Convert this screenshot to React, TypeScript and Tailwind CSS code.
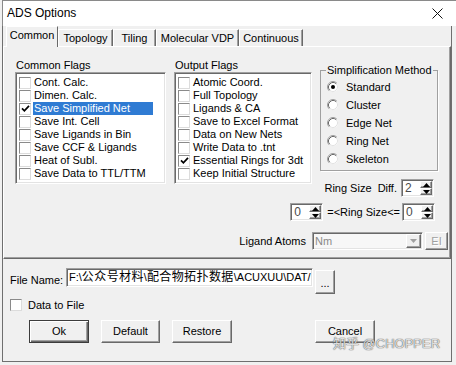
import React from "react";

const sunken =
  "border border-t-[#a0a0a0] border-l-[#a0a0a0] border-r-white border-b-white shadow-[inset_1px_1px_0_#696969,inset_-1px_-1px_0_#e3e3e3]";
const raised =
  "border border-t-white border-l-white border-r-[#696969] border-b-[#696969] shadow-[inset_-1px_-1px_0_#a0a0a0]";

const commonFlags = [
  { label: "Cont. Calc." },
  { label: "Dimen. Calc." },
  { label: "Save Simplified Net", checked: true, selected: true },
  { label: "Save Int. Cell" },
  { label: "Save Ligands in Bin" },
  { label: "Save CCF & Ligands" },
  { label: "Heat of Subl." },
  { label: "Save Data to TTL/TTM" },
];

const outputFlags = [
  { label: "Atomic Coord." },
  { label: "Full Topology" },
  { label: "Ligands & CA" },
  { label: "Save to Excel Format" },
  { label: "Data on New Nets" },
  { label: "Write Data to .tnt" },
  { label: "Essential Rings for 3dt", checked: true },
  { label: "Keep Initial Structure" },
];

const methods = ["Standard", "Cluster", "Edge Net", "Ring Net", "Skeleton"];

function Box({ checked }: { checked?: boolean }) {
  return (
    <span className="flex h-[12px] w-[12px] shrink-0 items-center justify-center border border-t-[#8a8a8a] border-l-[#8a8a8a] border-r-[#dcdcdc] border-b-[#dcdcdc] bg-white">
      {checked && (
        <svg width="9" height="9" viewBox="0 0 9 9">
          <path d="M1 4.3 L3.4 6.8 L8 1.8" stroke="#000" strokeWidth="1.7" fill="none" />
        </svg>
      )}
    </span>
  );
}

function FlagRow({ label, checked, selected }: { label: string; checked?: boolean; selected?: boolean }) {
  return (
    <div className="flex h-[13px] items-center">
      <Box checked={checked} />
      <span
        className={
          selected
            ? "ml-[2px] w-[120px] whitespace-nowrap bg-[#2f7bd3] pl-[1px] leading-[13px] text-white"
            : "ml-[2px] whitespace-nowrap pl-[1px] leading-[13px]"
        }
      >
        {label}
      </span>
    </div>
  );
}

function FlagList({ title, items, width }: { title: string; items: typeof commonFlags; width: string }) {
  return (
    <div className={width}>
      <div className="h-[13px] pl-[1px] leading-[13px]">{title}</div>
      <div className={`h-[112px] bg-white pl-[3px] pt-[3px] ${sunken}`}>
        {items.map((f) => (
          <FlagRow key={f.label} {...f} />
        ))}
      </div>
    </div>
  );
}

function Radio({ checked }: { checked?: boolean }) {
  return (
    <svg width="12" height="12" viewBox="0 0 12 12" className="shrink-0">
      <circle cx="6" cy="6" r="5" fill="#fff" />
      <path d="M2.11 9.89 A5.5 5.5 0 0 1 9.89 2.11" stroke="#a0a0a0" fill="none" />
      <path d="M2.82 9.18 A4.5 4.5 0 0 1 9.18 2.82" stroke="#696969" fill="none" />
      <path d="M9.18 2.82 A4.5 4.5 0 0 1 2.82 9.18" stroke="#e3e3e3" fill="none" />
      {checked && <circle cx="6" cy="6" r="2" fill="#000" />}
    </svg>
  );
}

function Spin({ value }: { value: string }) {
  return (
    <div className={`flex h-[18px] w-[33px] shrink-0 bg-white ${sunken}`}>
      <span className="flex-1 pl-[3px] text-[12px] leading-[16px] text-[#4a4a4a]">{value}</span>
      <div className="my-[1px] mr-[1px] flex w-[12px] flex-col">
        <div className={`flex h-[7px] items-center justify-center bg-[#f0f0f0] ${raised}`}>
          <svg width="7" height="4" viewBox="0 0 7 4">
            <path d="M0 4 H7 L3.5 0Z" fill="#000" />
          </svg>
        </div>
        <div className={`flex h-[7px] items-center justify-center bg-[#f0f0f0] ${raised}`}>
          <svg width="7" height="4" viewBox="0 0 7 4">
            <path d="M0 0 H7 L3.5 4Z" fill="#000" />
          </svg>
        </div>
      </div>
    </div>
  );
}

function Tab({ label, width, active }: { label: string; width: string; active?: boolean }) {
  return (
    <div
      className={
        active
          ? `relative z-10 -mb-px flex h-[21px] items-center justify-center border-t border-l border-r border-t-white border-l-white border-r-[#696969] bg-[#f0f0f0] pb-[3px] ${width}`
          : `flex h-[17px] items-center justify-center border-t border-l border-r border-t-white border-l-white border-r-[#696969] shadow-[inset_-1px_0_0_#a0a0a0] ${width}`
      }
    >
      {label}
    </div>
  );
}

function Button({ label, width, primary }: { label: string; width: string; primary?: boolean }) {
  return (
    <div
      className={
        primary
          ? `flex h-[23px] items-center justify-center border border-[#3c3c3c] shadow-[inset_1px_1px_0_#fff,inset_-1px_-1px_0_#696969,inset_-2px_-2px_0_#a0a0a0] ${width}`
          : `flex h-[23px] items-center justify-center ${raised} ${width}`
      }
    >
      {label}
    </div>
  );
}

export default function App() {
  return (
    <div className="relative h-[365px] w-[456px] overflow-hidden bg-[#f0f0f0] font-['Liberation_Sans','Noto_Sans_CJK_SC',sans-serif] text-[11px] leading-[13px] text-black">
      {/* title bar */}
      <div className="ml-[2px] flex h-[26px] w-[454px] items-center justify-between border-t border-l border-[#8a8a8a] bg-white pl-[4px] pr-[13px]">
        <span className="text-[12px]">ADS Options</span>
        <svg width="11" height="11" viewBox="0 0 11 11">
          <path d="M0.5 0.5 L10.5 10.5 M10.5 0.5 L0.5 10.5" stroke="#111" strokeWidth="1" />
        </svg>
      </div>

      {/* window body */}
      <div className="ml-[2px] h-[336px] w-[450px] border-l border-r border-b border-[#6f6f6f]">
        {/* tabs */}
        <div className="flex h-[20px] items-end pl-[3px]">
          <Tab label="Common" width="w-[52px]" active />
          <Tab label="Topology" width="w-[55px]" />
          <Tab label="Tiling" width="w-[43px]" />
          <Tab label="Molecular VDP" width="w-[83px]" />
          <Tab label="Continuous" width="w-[64px]" />
        </div>

        {/* tab panel */}
        <div className="h-[213px] w-full border border-t-white border-l-white border-r-[#696969] border-b-[#696969] pl-[11px] pt-[12px] shadow-[inset_-1px_-1px_0_#a0a0a0]">
          <div className="flex">
            <FlagList title="Common Flags" items={commonFlags} width="w-[151px]" />
            <div className="ml-[8px]">
              <FlagList title="Output Flags" items={outputFlags} width="w-[138px]" />
            </div>
            <div className="ml-[8px] w-[118px]">
              <fieldset className="mt-[5px] w-[118px] border border-[#a0a0a0] pb-[2px] pl-[5px] shadow-[1px_1px_0_#fff]">
                <legend className="px-[1px] leading-[13px]">Simplification Method</legend>
                <div className="pl-[1px] pt-[1px]">
                  {methods.map((m, i) => (
                    <div key={m} className="flex h-[18px] items-center gap-[7px]">
                      <Radio checked={i === 0} />
                      <span>{m}</span>
                    </div>
                  ))}
                </div>
              </fieldset>
              <div className="mt-[8px] flex items-center justify-end gap-[4px] pr-[4px]">
                <span className="whitespace-pre">Ring Size  Diff.</span>
                <Spin value="2" />
              </div>
            </div>
          </div>

          <div className="mt-[6px] flex items-center justify-end pr-[15px]">
            <Spin value="0" />
            <span className="ml-[4px] mr-[2px] whitespace-nowrap">=&lt;Ring Size&lt;=</span>
            <Spin value="0" />
          </div>

          <div className="mt-[11px] flex items-center justify-end pr-[2px]">
            <span className="mr-[6px]">Ligand Atoms</span>
            <div className={`mr-[2px] flex h-[18px] w-[111px] bg-[#f7f7f7] ${sunken}`}>
              <span className="flex-1 pl-[2px] leading-[16px] text-[#8a8a8a]">Nm</span>
              <div className={`my-[1px] mr-[1px] flex w-[15px] items-center justify-center bg-[#f0f0f0] ${raised}`}>
                <svg width="7" height="4" viewBox="0 0 7 4">
                  <path d="M0 0 H7 L3.5 4Z" fill="#a0a0a0" />
                </svg>
              </div>
            </div>
            <div className={`flex h-[18px] w-[23px] items-center justify-center text-[#a0a0a0] [text-shadow:1px_1px_0_#fff] ${raised}`}>
              EI
            </div>
          </div>
        </div>

        {/* file name */}
        <div className="mt-[9px] flex items-start pl-[7px]">
          <span className="mt-[6px] w-[56px]">File Name:</span>
          <div className={`h-[19px] w-[247px] overflow-hidden whitespace-nowrap bg-white pl-[2px] leading-[17px] ${sunken}`}>
            {"F:\\"}
            <span className="text-[12px] tracking-[0.4px]">公众号材料</span>
            {"\\"}
            <span className="text-[12px] tracking-[0.4px]">配合物拓扑数据</span>
            {"\\ACUXUU\\DAT/"}
          </div>
          <div className={`ml-[2px] mt-[2px] flex h-[24px] w-[20px] items-center justify-center pt-[3px] ${raised}`}>...</div>
        </div>

        <div className="mt-[4px] flex h-[14px] items-center pl-[7px]">
          <Box />
          <span className="ml-[6px]">Data to File</span>
        </div>

        <div className="mt-[8px] flex pl-[26px]">
          <Button label="Ok" width="w-[60px]" primary />
          <div className="ml-[12px]">
            <Button label="Default" width="w-[59px]" />
          </div>
          <div className="ml-[12px]">
            <Button label="Restore" width="w-[60px]" />
          </div>
          <div className="ml-[83px]">
            <Button label="Cancel" width="w-[60px]" />
          </div>
        </div>
      </div>

      {/* watermark */}
      <div className="absolute left-[333px] top-[337px] whitespace-nowrap text-[13px] text-white/80 [text-shadow:0_0_1px_#555,0_0_1px_#555]">
        知乎 @CHOPPER
      </div>
    </div>
  );
}
